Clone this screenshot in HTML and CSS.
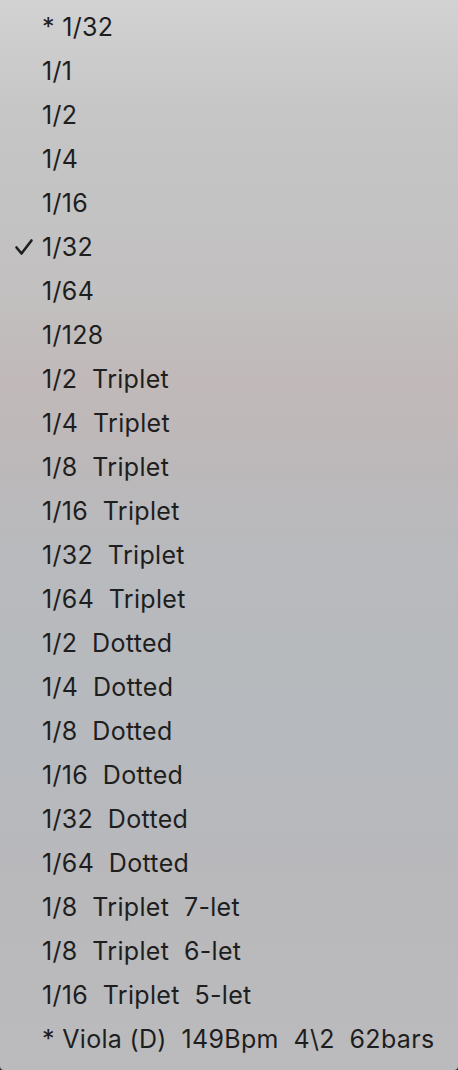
FILE: index.html
```html
<!DOCTYPE html>
<html>
<head>
<meta charset="utf-8">
<link rel="stylesheet" href="styles.css">
</head>
<body>
<div class="menu">
  <div class="item"><span class="label">* 1/32</span></div>
  <div class="item"><span class="label">1/1</span></div>
  <div class="item"><span class="label">1/2</span></div>
  <div class="item"><span class="label">1/4</span></div>
  <div class="item"><span class="label">1/16</span></div>
  <div class="item"><svg class="check" width="20" height="18" viewBox="0 0 20 18"><path d="M2.5 9.5 L7.5 15.5 L17.5 2.5" fill="none" stroke="#1e1e1e" stroke-width="2.6" stroke-linecap="round" stroke-linejoin="round"/></svg><span class="label">1/32</span></div>
  <div class="item"><span class="label">1/64</span></div>
  <div class="item"><span class="label">1/128</span></div>
  <div class="item"><span class="label">1/2  Triplet</span></div>
  <div class="item"><span class="label">1/4  Triplet</span></div>
  <div class="item"><span class="label">1/8  Triplet</span></div>
  <div class="item"><span class="label">1/16  Triplet</span></div>
  <div class="item"><span class="label">1/32  Triplet</span></div>
  <div class="item"><span class="label">1/64  Triplet</span></div>
  <div class="item"><span class="label">1/2  Dotted</span></div>
  <div class="item"><span class="label">1/4  Dotted</span></div>
  <div class="item"><span class="label">1/8  Dotted</span></div>
  <div class="item"><span class="label">1/16  Dotted</span></div>
  <div class="item"><span class="label">1/32  Dotted</span></div>
  <div class="item"><span class="label">1/64  Dotted</span></div>
  <div class="item"><span class="label">1/8  Triplet  7-let</span></div>
  <div class="item"><span class="label">1/8  Triplet  6-let</span></div>
  <div class="item"><span class="label">1/16  Triplet  5-let</span></div>
  <div class="item"><span class="label">* Viola (D)  149Bpm  4\2  62bars</span></div>
</div>
</body>
</html>
```
FILE: styles.css
```css
html, body {
  margin: 0;
  padding: 0;
  background: #2a2a2a;
}
.menu {
  width: 458px;
  height: 1070px;
  box-sizing: border-box;
  padding-top: 5px;
  border-radius: 0 0 4px 4px;
  background: linear-gradient(to bottom,
    #d2d2d2 0px,
    #c6c6c7 110px,
    #c2c0c0 290px,
    #c1b9b9 380px,
    #bdb8b9 450px,
    #b8babd 560px,
    #b6b9bd 760px,
    #b9b8bb 900px,
    #bbbbbe 1070px);
  font-family: Inter, "Noto Sans", sans-serif;
  font-size: 25px;
  letter-spacing: 0.32px;
  color: #1e1e1e;
}
.item {
  height: 44px;
  display: flex;
  align-items: center;
  position: relative;
  padding-left: 42px;
}
.label {
  white-space: pre;
}
.check {
  position: absolute;
  left: 14px;
  top: 13px;
}
```
